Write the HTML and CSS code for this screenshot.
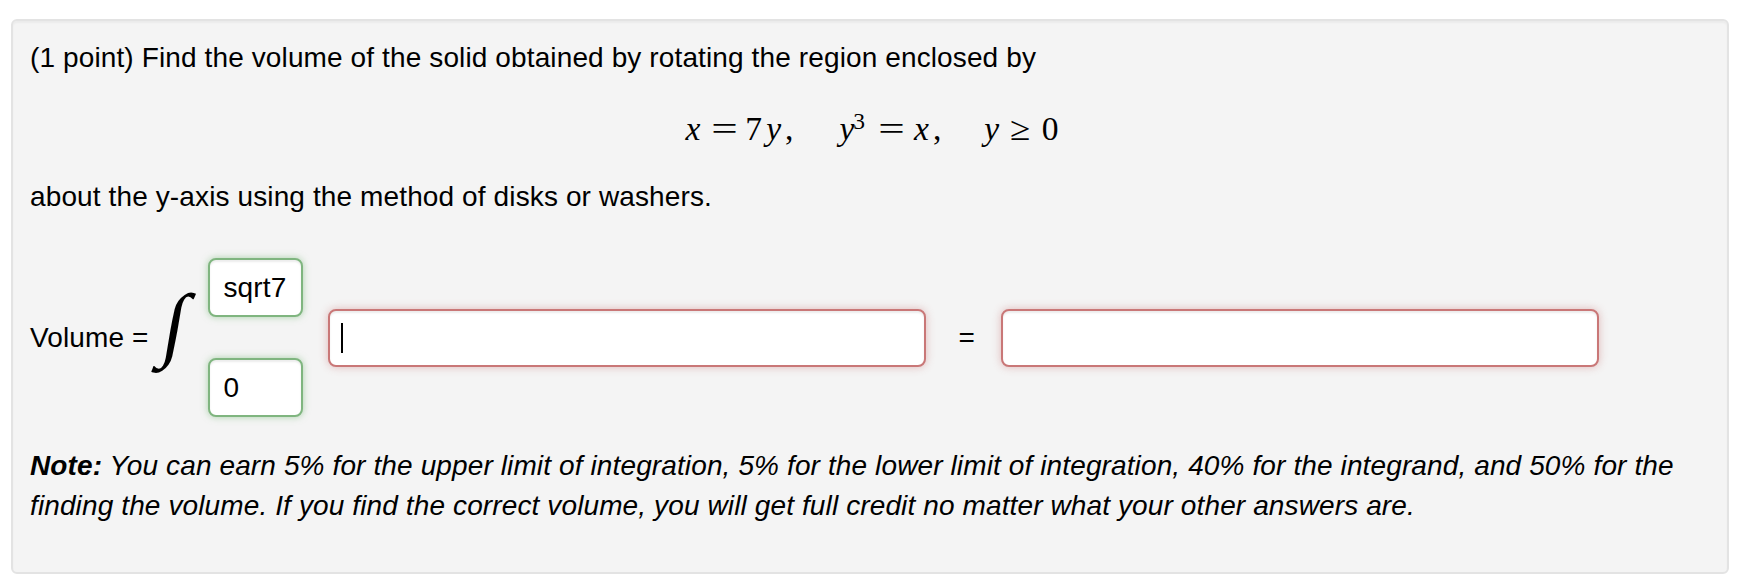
FILE: index.html
```html
<!DOCTYPE html>
<html>
<head>
<meta charset="utf-8">
<link rel="stylesheet" href="styles.css">
</head>
<body>
<div class="problem">
  <p class="line">(1 point) Find the volume of the solid obtained by rotating the region enclosed by</p>
  <div class="math"><i class="v">x</i><span class="rel r1"><span class="eqs">=</span></span><span class="num">7</span><i class="v y1">y</i><span class="punct">,</span><span class="quad"></span><i class="v">y</i><span class="sup">3</span><span class="rel r2"><span class="eqs">=</span></span><i class="v">x</i><span class="punct">,</span><span class="quad q2"></span><i class="v">y</i><span class="rel r3"><span class="geq">≥</span></span><span class="num">0</span></div>
  <p class="line">about the y-axis using the method of disks or washers.</p>
  <div class="volume-row">
    <span class="label">Volume =</span>
    <span class="integral">∫</span>
    <div class="limits">
      <input class="ans correct limit" type="text" value="sqrt7">
      <input class="ans correct limit" type="text" value="0">
    </div>
    <span class="field">
      <input class="ans incorrect wide" type="text" value="">
      <span class="caret"></span>
    </span>
    <span class="eq">=</span>
    <input class="ans incorrect wide" type="text" value="">
  </div>
  <p class="note"><b>Note:</b> You can earn 5% for the upper limit of integration, 5% for the lower limit of integration, 40% for the integrand, and 50% for the finding the volume. If you find the correct volume, you will get full credit no matter what your other answers are.</p>
</div>
</body>
</html>
```

FILE: styles.css
```css
html, body {
  margin: 0;
  padding: 0;
  background: #ffffff;
}
body {
  padding: 19px 11px 0;
  font-family: "Liberation Sans", Arial, Helvetica, sans-serif;
  font-size: 28px;
  line-height: 40px;
  letter-spacing: 0.12px;
  color: #000;
}
.problem {
  background: #f4f4f4;
  border: 2px solid #e3e3e3;
  border-radius: 6px;
  box-shadow: inset 0 2px 2px rgba(0,0,0,0.04);
  padding: 17px 17px 46px;
}
.line {
  margin: 0;
  height: 40px;
  white-space: nowrap;
}
.math {
  font-family: "Liberation Serif", "Times New Roman", serif;
  font-size: 33.6px;
  line-height: 40px;
  height: 40px;
  letter-spacing: 0;
  text-align: center;
  margin: 31px 0 28px;
  white-space: nowrap;
  padding-left: 4px;
}
.math i {
  font-style: italic;
}
.math .v {
  display: inline-block;
}
.math .y1 {
  margin-left: 4px;
}
.math .rel {
  display: inline-block;
}
.math .eqs {
  display: inline-block;
  transform: scaleX(1.4);
}
.math .geq {
  display: inline-block;
  transform: scaleX(1.1);
}
.math .r1 {
  margin: 0 11px 0 15px;
}
.math .r2 {
  margin: 0 13px 0 17px;
}
.math .r3 {
  margin: 0 12px 0 12px;
}
.math .num {
  display: inline-block;
}
.math .punct {
  display: inline-block;
  margin-left: 4px;
}
.math .quad {
  display: inline-block;
  width: 46px;
}
.math .q2 {
  width: 43px;
}
.math .sup {
  display: inline-block;
  font-size: 23.5px;
  position: relative;
  top: -11px;
  margin-left: -1px;
}
.volume-row {
  display: flex;
  align-items: center;
  margin-top: 41px;
  height: 159px;
}
.label {
  white-space: nowrap;
}
.integral {
  font-family: "Liberation Serif", "Times New Roman", serif;
  font-style: italic;
  font-size: 82px;
  line-height: 82px;
  margin-left: 16px;
  width: 34px;
  display: inline-block;
  transform: translateY(-14px) skewX(-10deg);
}
.limits {
  display: flex;
  flex-direction: column;
  justify-content: space-between;
  height: 159px;
  margin-left: 10px;
}
.ans {
  box-sizing: border-box;
  font-family: "Liberation Sans", Arial, Helvetica, sans-serif;
  font-size: 28px;
  letter-spacing: 0.12px;
  color: #000;
  background: #fff;
  border-radius: 8px;
  border: 2px solid;
  outline: none;
  margin: 0;
}
.limit {
  width: 95px;
  height: 59px;
  padding: 0 0 0 13px;
}
.correct {
  border-color: #7fb57f;
  box-shadow: inset 0 2px 2px rgba(0,0,0,0.075), 0 0 7px rgba(110,180,110,0.55);
}
.incorrect {
  border-color: #c97777;
  box-shadow: inset 0 2px 2px rgba(0,0,0,0.075), 0 0 8px rgba(200,110,110,0.45);
}
.wide {
  width: 598px;
  height: 58px;
  padding: 0 12px;
}
.field {
  position: relative;
  display: inline-block;
  margin-left: 25px;
  height: 58px;
}
.caret {
  position: absolute;
  left: 13px;
  top: 14px;
  width: 2px;
  height: 30px;
  background: #000;
}
.eq {
  margin: 0 26px 0 32px;
}
.note {
  margin: 29px 0 0;
  font-style: italic;
}
.note b {
  font-weight: bold;
}
```
